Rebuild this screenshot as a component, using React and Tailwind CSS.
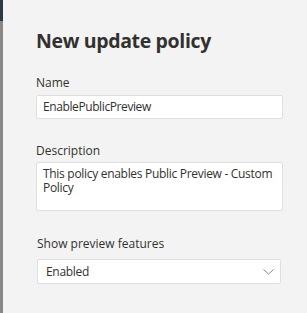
import React from "react";

export default function App() {
  return (
    <div className="flex w-[307px] h-[313px] bg-[#f3f3f3] overflow-hidden" style={{ fontFamily: '"Open Sans", "Noto Sans", sans-serif' }}>
      <div className="flex flex-col w-[3px] shrink-0">
        <div className="h-[21px] bg-[#2b3948]" />
        <div className="flex-1 bg-[#8a8886]" />
      </div>
      <div className="flex flex-col pl-[33px] w-[284px]">
        <h1 className="mt-[28px] text-[19.5px] leading-[26px] font-bold text-[#323130] tracking-[-0.35px]">New update policy</h1>

        <label className="mt-[21px] text-[12px] leading-[16px] text-[#323130]">Name</label>
        <div className="mt-[4px] h-[24px] w-[247px] bg-white border border-[#e1dfdd] rounded-[2px] flex items-center px-[6px] text-[12px] text-[#323130] tracking-[-0.4px]">
          EnablePublicPreview
        </div>

        <label className="mt-[24px] text-[12px] leading-[16px] text-[#323130]">Description</label>
        <div className="mt-[3px] h-[49px] w-[247px] bg-white border border-[#e1dfdd] rounded-[2px] px-[6px] pt-[4px] text-[12px] leading-[14px] text-[#323130] tracking-[-0.3px]">
          This policy enables Public Preview - Custom Policy
        </div>

        <label className="mt-[25px] ml-[1px] text-[12px] leading-[16px] text-[#323130]">Show preview features</label>
        <div className="mt-[7px] ml-[1px] h-[25px] w-[244px] bg-white border border-[#e1dfdd] rounded-[2px] flex items-center justify-between pl-[8px] pr-[6px] text-[12px] text-[#323130] tracking-[-0.3px]">
          <span>Enabled</span>
          <svg width="11" height="6" viewBox="0 0 11 6" fill="none">
            <path d="M0.5 0.5 L5.5 5 L10.5 0.5" stroke="#8a8886" strokeWidth="1" />
          </svg>
        </div>
      </div>
    </div>
  );
}
